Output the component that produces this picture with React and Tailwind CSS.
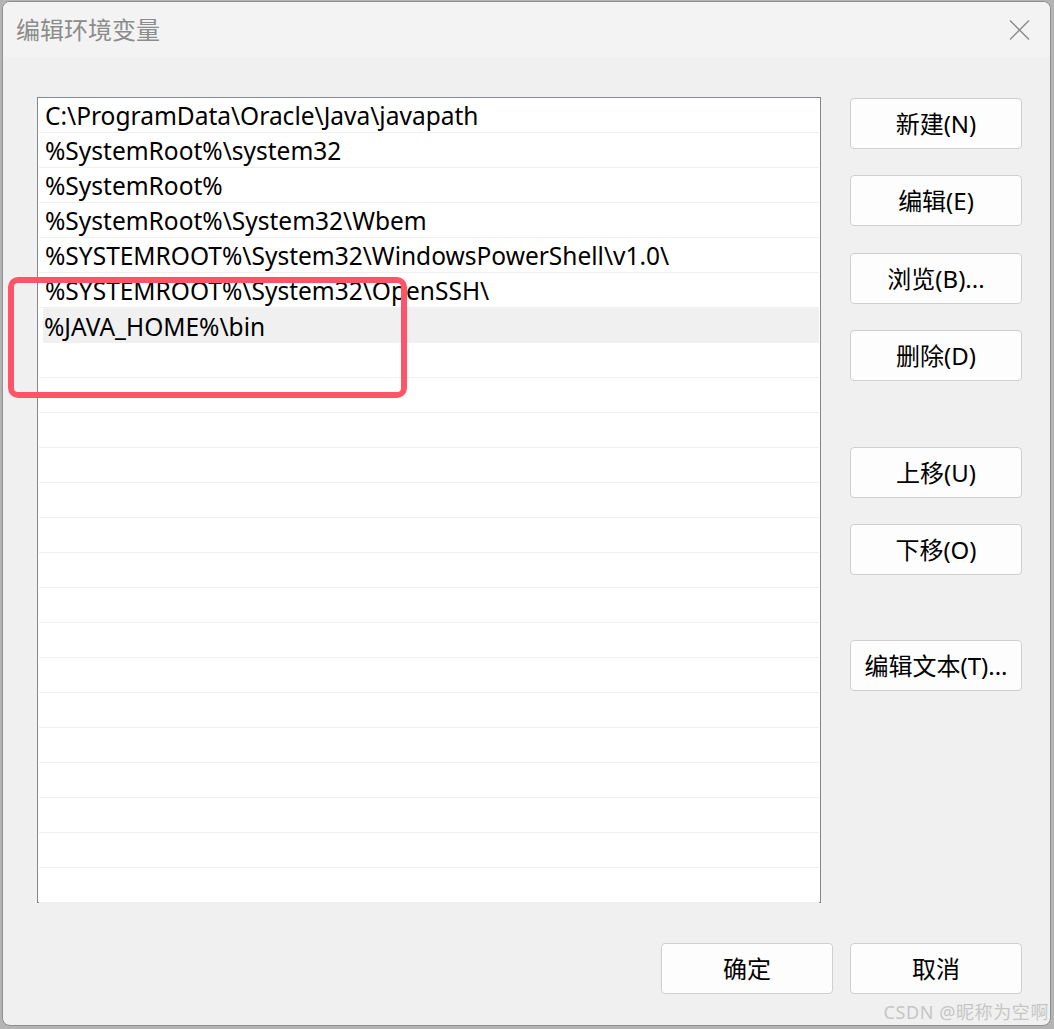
import React from "react";

const paths = [
  "C:\\ProgramData\\Oracle\\Java\\javapath",
  "%SystemRoot%\\system32",
  "%SystemRoot%",
  "%SystemRoot%\\System32\\Wbem",
  "%SYSTEMROOT%\\System32\\WindowsPowerShell\\v1.0\\",
  "%SYSTEMROOT%\\System32\\OpenSSH\\",
  "%JAVA_HOME%\\bin",
];

const ROWS = 23;
const SELECTED = 6;

function WinButton({ children, className = "" }) {
  return (
    <button
      type="button"
      className={`w-[172px] h-[51px] rounded-[4px] border border-[#cfcfcf] bg-[#fdfdfd] text-[24px] text-black flex items-center justify-center leading-none ${className}`}
    >
      {children}
    </button>
  );
}

export default function App() {
  const rows = Array.from({ length: ROWS }, (_, i) => paths[i] ?? "");
  return (
    <div
      className="relative w-[1054px] h-[1029px] bg-[#b4b4b4] pl-[2px] pt-[1px] pr-[3px] pb-[3px] overflow-hidden"
      style={{ fontFamily: '"Noto Sans", "Noto Sans CJK SC", sans-serif' }}
    >
      <div className="w-full h-full rounded-[8px] border border-[#8f8f8f] bg-[#f0f0f0] flex flex-col overflow-hidden">
        {/* title bar */}
        <div className="h-[55px] shrink-0 bg-[#f3f3f3] flex items-center justify-between pl-[13px] pr-[20px]">
          <span className="text-[24px] text-[#8c8c8c] leading-none">编辑环境变量</span>
          <svg width="21" height="20" viewBox="0 0 21 20" fill="none" stroke="#8a8a8a" strokeWidth="1.4">
            <path d="M1 0.5L20 19.5M20 0.5L1 19.5" />
          </svg>
        </div>

        {/* body */}
        <div className="flex pt-[40px]">
          <div className="relative ml-[34px] w-[784px] h-[806px] border border-[#838790] bg-white">
            {rows.map((text, i) => (
              <div
                key={i}
                className={
                  i === SELECTED
                    ? "h-[35px] ml-[5px] mr-[1px] pl-[1px] pt-[3px] bg-[#f0f0f0] flex items-center text-[24.5px] text-black whitespace-nowrap leading-none"
                    : "h-[35px] mx-[1px] pl-[6px] pt-[3px] border-b border-[#efefef] flex items-center text-[24.5px] text-black whitespace-nowrap leading-none"
                }
              >
                {text}
              </div>
            ))}
          </div>

          <div className="ml-[29px] pt-[1px] flex flex-col">
            <WinButton>新建(N)</WinButton>
            <WinButton className="mt-[26px]">编辑(E)</WinButton>
            <WinButton className="mt-[27px]">浏览(B)...</WinButton>
            <WinButton className="mt-[26px]">删除(D)</WinButton>
            <WinButton className="mt-[66px]">上移(U)</WinButton>
            <WinButton className="mt-[26px]">下移(O)</WinButton>
            <WinButton className="mt-[65px]">编辑文本(T)...</WinButton>
          </div>
        </div>

        <div className="flex gap-[17px] ml-[658px] mt-[40px]">
          <WinButton>确定</WinButton>
          <WinButton>取消</WinButton>
        </div>
      </div>

      {/* highlight annotation */}
      <div className="absolute left-[8px] top-[277px] w-[399px] h-[121px] rounded-[10px] border-[6px] border-[#fe5468]" />

      {/* watermark */}
      <div className="absolute right-[5px] top-[999px] text-[18px] text-[#c6c6c6] tracking-[0.6px] whitespace-nowrap font-normal">
        CSDN @昵称为空啊
      </div>
    </div>
  );
}
